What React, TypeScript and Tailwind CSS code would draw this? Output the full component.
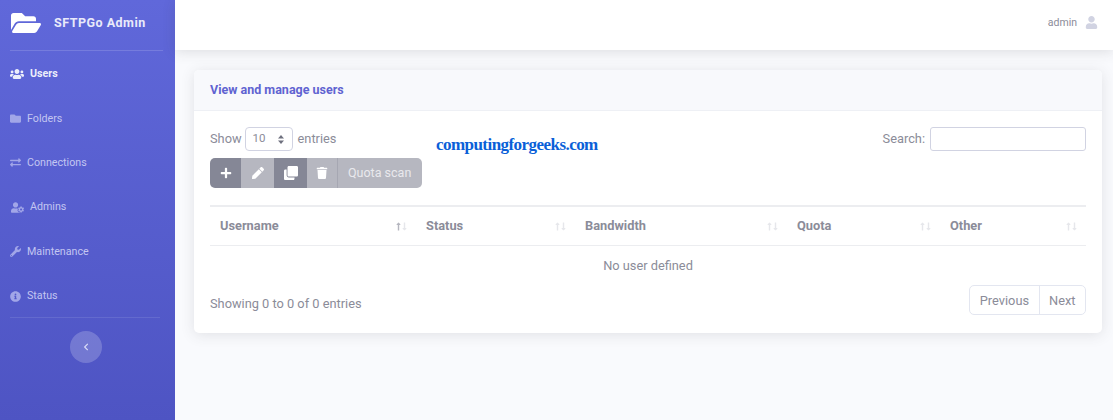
import React from 'react';
import {
  FaChevronLeft,
  FaClone,
  FaExchangeAlt,
  FaFolder,
  FaFolderOpen,
  FaInfoCircle,
  FaLongArrowAltDown,
  FaLongArrowAltUp,
  FaPen,
  FaPlus,
  FaTrash,
  FaUser,
  FaUserCog,
  FaUsers,
  FaWrench,
} from 'react-icons/fa';

const navItems = [
  { label: 'Users', icon: FaUsers, active: true, width: 'w-[14px]', gap: 'gap-[6px]', iconSize: 14 },
  { label: 'Folders', icon: FaFolder, active: false, width: 'w-[11px]', gap: 'gap-[6px]', iconSize: 11 },
  { label: 'Connections', icon: FaExchangeAlt, active: false, width: 'w-[11px]', gap: 'gap-[6px]', iconSize: 11 },
  { label: 'Admins', icon: FaUserCog, active: false, width: 'w-[14px]', gap: 'gap-[6px]', iconSize: 13 },
  { label: 'Maintenance', icon: FaWrench, active: false, width: 'w-[11px]', gap: 'gap-[6px]', iconSize: 11 },
  { label: 'Status', icon: FaInfoCircle, active: false, width: 'w-[11px]', gap: 'gap-[6px]', iconSize: 11 },
];

const columns = [
  { label: 'Username', width: 'w-[206px]' },
  { label: 'Status', width: 'w-[159px]' },
  { label: 'Bandwidth', width: 'w-[212px]' },
  { label: 'Quota', width: 'w-[153px]' },
  { label: 'Other', width: 'flex-1' },
];

function SortArrows({ up }: { up?: boolean }) {
  return (
    <span className="flex items-center">
      <FaLongArrowAltUp size={9} className={up ? 'text-[#b5b6bf]' : 'text-[#e6e7eb]'} />
      <FaLongArrowAltDown size={9} className="-ml-[3px] text-[#e6e7eb]" />
    </span>
  );
}

function Sidebar() {
  return (
    <aside className="flex h-full w-[175px] shrink-0 flex-col bg-gradient-to-b from-[#6068da] to-[#4e54c3]">
      <div className="flex h-[50px] shrink-0 items-center pb-[4px] pl-[11px]">
        <FaFolderOpen size={30} className="text-white" />
        <span className="ml-[13px] text-[12.5px] font-bold tracking-[0.04em] text-[#e9eafa]">SFTPGo Admin</span>
      </div>
      <div className="ml-[10px] mr-[12px] h-px bg-white/15" />
      <nav className="-mb-px flex flex-col pt-px">
        {navItems.map((item) => (
          <div
            key={item.label}
            className={`flex h-[44.4px] items-center pl-[10px] text-[10.7px] ${item.gap} ${
              item.active ? 'font-bold text-[#eceefb]' : 'text-[#c3c6f1]'
            }`}
          >
            <span className={`flex justify-center ${item.width} ${item.active ? 'text-[#eceefb]' : 'text-[#a2a6e8]'}`}>
              <item.icon size={item.iconSize} />
            </span>
            <span>{item.label}</span>
          </div>
        ))}
      </nav>
      <div className="ml-[10px] mr-[15px] h-px bg-white/10" />
      <div className="mt-[13px] flex justify-center pr-[3px]">
        <button className="flex h-8 w-8 items-center justify-center rounded-full bg-white/20 text-[#d9dbf7]">
          <FaChevronLeft size={8} />
        </button>
      </div>
    </aside>
  );
}

function Toolbar() {
  return (
    <div className="mt-[7px] flex h-[30px] w-fit items-stretch overflow-hidden rounded-[5px] text-white">
      <div className="flex w-[31px] items-center justify-center bg-[#858796]">
        <FaPlus size={12} />
      </div>
      <div className="flex w-[33px] items-center justify-center bg-[#b6b7c0]">
        <FaPen size={12} />
      </div>
      <div className="flex w-[33px] items-center justify-center bg-[#858796]">
        <FaClone size={14} />
      </div>
      <div className="flex w-[30px] items-center justify-center bg-[#b6b7c0]">
        <FaTrash size={12} />
      </div>
      <div className="flex items-center border-l border-[#a6a7b2] bg-[#b6b7c0] pl-[10px] pr-[11px] text-[12.5px] text-[#e9e9ed]">
        Quota scan
      </div>
    </div>
  );
}

function UsersTable() {
  return (
    <div className="mt-[17px] text-[12.8px] text-[#8b8c99]">
      <div className="flex h-[41px] items-center border-y border-[#ecedf0] [border-top-width:2px]">
        {columns.map((col, i) => (
          <div key={col.label} className={`flex items-center justify-between pl-[10px] pr-[7px] font-bold ${col.width}`}>
            <span>{col.label}</span>
            <SortArrows up={i === 0} />
          </div>
        ))}
      </div>
      <div className="flex h-[39px] items-center justify-center">No user defined</div>
    </div>
  );
}

export default function App() {
  return (
    <div className="flex h-[420px] w-[1113px] overflow-hidden bg-[#f9fafd] font-['Roboto',sans-serif]">
      <Sidebar />
      <div className="flex min-w-0 flex-1 flex-col">
        <header className="flex h-[50px] shrink-0 items-center justify-end gap-[8px] bg-white pb-[5px] pr-[15px] shadow-[0_2px_12px_rgba(58,59,69,0.15)]">
          <span className="text-[10.5px] text-[#8b8c99]">admin</span>
          <FaUser size={13} className="text-[#d1d3e2]" />
        </header>
        <main className="pl-[19px] pr-[11px] pt-[20px]">
          <section className="overflow-hidden rounded-[5px] bg-white shadow-[0_2px_14px_rgba(58,59,69,0.13)]">
            <div className="flex h-[41px] items-center border-b border-[#eef0f5] bg-[#f8f9fc] pl-[16px] pt-px text-[12.5px] font-bold text-[#5f63d1]">
              View and manage users
            </div>
            <div className="h-[222px] px-[16px] pt-[16px]">
              <div className="relative flex items-start justify-between text-[12.8px] text-[#8b8c99]">
                <div>
                  <div className="flex h-[24px] items-center">
                    <span>Show</span>
                    <div className="ml-[3px] mr-[5px] flex h-[24px] w-[48px] items-center justify-between rounded-[4px] border border-[#d1d3e2] pl-[7px] pr-[8px] text-[11.5px]">
                      <span>10</span>
                      <span className="flex flex-col text-[#6e707e]">
                        <svg width="6" height="9" viewBox="0 0 6 9" fill="currentColor">
                          <path d="M3 0 6 3.5H0Z" />
                          <path d="M3 9 0 5.5H6Z" />
                        </svg>
                      </span>
                    </div>
                    <span>entries</span>
                  </div>
                  <Toolbar />
                </div>
                <span className="absolute left-[226px] top-[6px] font-['Liberation_Serif',serif] text-[17px] font-bold leading-[24px] tracking-[-0.55px] text-[#0a5fd8]">
                  computingforgeeks.com
                </span>
                <div className="flex h-[24px] items-center gap-[5px]">
                  <span>Search:</span>
                  <input
                    aria-label="Search"
                    className="h-[24px] w-[156px] rounded-[3px] border border-[#d1d3e2] bg-white"
                  />
                </div>
              </div>
              <UsersTable />
              <div className="flex items-center justify-between text-[12.8px] text-[#8b8c99]">
                <span className="mt-[7px]">Showing 0 to 0 of 0 entries</span>
                <div className="flex h-[30px] items-stretch rounded-[5px] border border-[#e3e6f0]">
                  <span className="flex items-center border-r border-[#e3e6f0] px-[9.5px] pt-[2px]">Previous</span>
                  <span className="flex items-center px-[9.5px] pt-[2px]">Next</span>
                </div>
              </div>
            </div>
          </section>
        </main>
      </div>
    </div>
  );
}
